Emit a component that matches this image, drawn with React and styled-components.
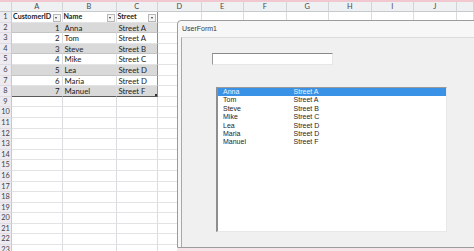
import React from 'react'
import styled, { createGlobalStyle } from 'styled-components'

const GlobalStyle = createGlobalStyle`
  html, body {
    margin: 0;
    padding: 0;
    background: #ffffff;
    overflow: hidden;
  }
`

const Screen = styled.div`
  position: relative;
  width: 474px;
  height: 251px;
  overflow: hidden;
  font-family: Lato, "Liberation Sans", sans-serif;
  background: #ffffff;
`

const TopStrip = styled.div`
  height: 2px;
  background: #f2c8d0;
`

const Grid = styled.div`
  display: grid;
  grid-template-columns: 12px 50.5px 54px 41.5px 43.5px repeat(6, 42.5px) 1fr;
  grid-template-rows: 10px repeat(23, 10.6px);
`

const ColHead = styled.div`
  background: #eef0f2;
  border-right: 1px solid #d2d5d8;
  border-bottom: 1px solid #c7cacd;
  color: #4a4a4a;
  font-size: 7.4px;
  line-height: 9px;
  text-align: center;
  box-sizing: border-box;
`

const RowHead = styled.div`
  background: #edebf0;
  border-right: 1px solid #c9c6cf;
  border-bottom: 1px solid #dedbe2;
  color: #3f3f4a;
  font-size: 7.4px;
  line-height: 10px;
  text-align: center;
  box-sizing: border-box;
`

const Cell = styled.div`
  position: relative;
  background: ${p => p.$bg || '#ffffff'};
  border-right: 1px solid ${p => (p.$edge ? '#8c8c8c' : '#dadcdf')};
  border-bottom: 1px solid ${p => (p.$last ? '#5a5a5a' : p.$bg ? '#c4c4c4' : '#e2e3e5')};
  color: #222222;
  font-size: ${p => (p.$bold ? '7.1px' : '7.8px')};
  font-weight: ${p => (p.$bold ? 700 : 400)};
  line-height: 10px;
  text-align: ${p => (p.$right ? 'right' : 'left')};
  padding: 0 2px 0 ${p => (p.$bold ? '1px' : '2px')};
  box-sizing: border-box;
  white-space: nowrap;
  overflow: hidden;
`

const Drop = styled.span`
  position: absolute;
  right: 1px;
  top: 1.5px;
  width: 6px;
  height: 6px;
  border: 1px solid #b8b8b8;
  background: #f4f4f4;
  &::after {
    content: '';
    position: absolute;
    left: 1.5px;
    top: 2px;
    border-left: 1.5px solid transparent;
    border-right: 1.5px solid transparent;
    border-top: 2px solid #333;
  }
`

const Handle = styled.span`
  position: absolute;
  right: 0;
  bottom: 0;
  width: 2px;
  height: 2px;
  background: #333;
`

const Window = styled.div`
  position: absolute;
  left: 177px;
  top: 20px;
  right: -20px;
  bottom: 3px;
  display: flex;
  flex-direction: column;
  background: #f7f7f7;
  border: 1px solid #9c9c9c;
  border-radius: 4px 0 0 0;
  box-shadow: 0 3px 0 #f5e4e8;
  font-family: "Liberation Sans", Arial, sans-serif;
`

const TitleBar = styled.div`
  height: 16px;
  padding-left: 4px;
  font-size: 7px;
  line-height: 16px;
  color: #3a3a3a;
`

const Client = styled.div`
  flex: 1;
  margin-left: 3px;
  background: #f0f0f0;
  border-left: 1px solid #a9a9a9;
  border-top: 1px solid #dcdcdc;
  display: flex;
  flex-direction: column;
  align-items: flex-start;
`

const TextBox = styled.div`
  margin: 15px 0 0 30px;
  width: 121px;
  height: 12px;
  background: #ffffff;
  border-top: 1px solid #8a8a8a;
  border-left: 1px solid #9a9a9a;
  border-right: 1px solid #e6e6e6;
  border-bottom: 1px solid #e6e6e6;
  box-sizing: border-box;
`

const ListBox = styled.div`
  margin: 22px 0 0 34px;
  width: 231px;
  height: 145px;
  background: #ffffff;
  border-top: 1px solid #9a9a9a;
  border-left: 2px solid #8e8e8e;
  border-right: 1px solid #e8e8e8;
  border-bottom: 1px solid #e8e8e8;
  box-sizing: border-box;
`

const ListRow = styled.div`
  display: flex;
  height: 8.4px;
  padding-left: 5px;
  font-size: 7px;
  line-height: 8.4px;
  background: ${p => (p.$selected ? '#3a92e6' : 'transparent')};
  color: ${p => (p.$selected ? '#e9f3ff' : '#262626')};
`

const ListCol = styled.span`
  width: 70.6px;
`

const columns = ['A', 'B', 'C', 'D', 'E', 'F', 'G', 'H', 'I', 'J', '']

const customers = [
  { id: 1, name: 'Anna', street: 'Street A' },
  { id: 2, name: 'Tom', street: 'Street A' },
  { id: 3, name: 'Steve', street: 'Street B' },
  { id: 4, name: 'Mike', street: 'Street C' },
  { id: 5, name: 'Lea', street: 'Street D' },
  { id: 6, name: 'Maria', street: 'Street D' },
  { id: 7, name: 'Manuel', street: 'Street F' },
]

const App = () => {
  const rows = []
  for (let r = 1; r <= 23; r++) {
    const cells = [<RowHead key={`h${r}`}>{r}</RowHead>]
    for (let c = 0; c < columns.length; c++) {
      let content = null
      let props = {}
      if (r === 1 && c < 3) {
        content = (
          <>
            {['CustomerID', 'Name', 'Street'][c]}
            <Drop />
          </>
        )
        props = { $bold: true, $edge: c === 2 }
      } else if (r >= 2 && r <= 8 && c < 3) {
        const item = customers[r - 2]
        const banded = r % 2 === 0
        content = [item.id, item.name, item.street][c]
        props = {
          $bg: banded ? '#d9d9d9' : undefined,
          $right: c === 0,
          $last: r === 8,
          $edge: c === 2,
        }
        if (r === 8 && c === 2) content = <>{content}<Handle /></>
      }
      cells.push(
        <Cell key={`${r}-${c}`} {...props}>
          {content}
        </Cell>
      )
    }
    rows.push(cells)
  }

  return (
    <Screen>
      <GlobalStyle />
      <TopStrip />
      <Grid>
        <ColHead />
        {columns.map((col, i) => (
          <ColHead key={i}>{col}</ColHead>
        ))}
        {rows}
      </Grid>
      <Window>
        <TitleBar>UserForm1</TitleBar>
        <Client>
          <TextBox />
          <ListBox>
            {customers.map((c, i) => (
              <ListRow key={c.id} $selected={i === 0}>
                <ListCol>{c.name}</ListCol>
                <ListCol>{c.street}</ListCol>
              </ListRow>
            ))}
          </ListBox>
        </Client>
      </Window>
    </Screen>
  )
}

export default App
